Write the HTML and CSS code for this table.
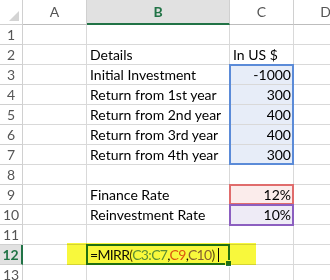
FILE: index.html
```html
<!DOCTYPE html>
<html>
<head>
<meta charset="utf-8">
<title>MIRR example</title>
<link rel="stylesheet" href="styles.css">
</head>
<body>
<div class="sheet">
  <div class="hd corner"><span class="tri"></span></div>
  <div class="hd col">A</div>
  <div class="hd col col-active">B</div>
  <div class="hd col">C</div>
  <div class="hd col">D</div>

  <div class="hd row">1</div><div class="c"></div><div class="c"></div><div class="c"></div><div class="c"></div>
  <div class="hd row">2</div><div class="c"></div><div class="c">Details</div><div class="c">In US $</div><div class="c"></div>
  <div class="hd row">3</div><div class="c"></div><div class="c">Initial Investment</div><div class="c num fill-blue anchor">-1000<div class="range range-blue"></div></div><div class="c"></div>
  <div class="hd row">4</div><div class="c"></div><div class="c">Return from 1st year</div><div class="c num fill-blue">300</div><div class="c"></div>
  <div class="hd row">5</div><div class="c"></div><div class="c">Return from 2nd year</div><div class="c num fill-blue">400</div><div class="c"></div>
  <div class="hd row">6</div><div class="c"></div><div class="c">Return from 3rd year</div><div class="c num fill-blue">400</div><div class="c"></div>
  <div class="hd row">7</div><div class="c"></div><div class="c">Return from 4th year</div><div class="c num fill-blue">300</div><div class="c"></div>
  <div class="hd row">8</div><div class="c"></div><div class="c"></div><div class="c"></div><div class="c"></div>
  <div class="hd row">9</div><div class="c"></div><div class="c">Finance Rate</div><div class="c num fill-red anchor">12%<div class="range range-red"></div></div><div class="c"></div>
  <div class="hd row">10</div><div class="c"></div><div class="c">Reinvestment Rate</div><div class="c num fill-purple anchor">10%<div class="range range-purple"></div></div><div class="c"></div>
  <div class="hd row">11</div><div class="c"></div><div class="c"></div><div class="c"></div><div class="c"></div>
  <div class="hd row row-active">12</div><div class="c"></div><div class="c anchor formula"><span class="fn">=MIRR</span><span class="paren">(</span><span class="ref-blue">C3:C7</span>,<span class="ref-red">C9</span>,<span class="ref-purple">C10</span><span class="paren">)</span><span class="caret"></span><div class="active-box"><span class="handle"></span></div><div class="marker"></div></div><div class="c"></div><div class="c"></div>
  <div class="hd row">13</div><div class="c"></div><div class="c"></div><div class="c"></div><div class="c"></div>
</div>
</body>
</html>
```

FILE: styles.css
```css
html, body {
  margin: 0;
  padding: 0;
  background: #ffffff;
}

body {
  width: 330px;
  height: 280px;
  overflow: hidden;
  font-family: Lato, "Liberation Sans", sans-serif;
}

.sheet {
  display: grid;
  grid-template-columns: 23px 64px 143px 64px 64px;
  grid-template-rows: 25px repeat(13, 20px);
  font-size: 14px;
  color: #000000;
}

.c {
  box-sizing: border-box;
  border-right: 1px solid #d9d9d9;
  border-bottom: 1px solid #d9d9d9;
  padding: 0 3px;
  line-height: 19px;
  white-space: nowrap;
}

.num {
  text-align: right;
  padding-right: 2px;
}

.anchor {
  position: relative;
}

.fill-blue { background: #e7edf8; }
.fill-red { background: #fbeceb; }
.fill-purple { background: #eeebf6; }

.hd {
  box-sizing: border-box;
  border-right: 1px solid #d0d0d0;
  border-bottom: 1px solid #d0d0d0;
  background: #ffffff;
  color: #555555;
  text-align: center;
}

.col {
  line-height: 24px;
  border-bottom-color: #bdbdbd;
}

.col-active {
  background: #e1e1e1;
  color: #217346;
  font-weight: bold;
  border-bottom: 2px solid #217346;
  line-height: 23px;
}

.row {
  line-height: 19px;
}

.row-active {
  background: #e1e1e1;
  color: #217346;
  font-weight: bold;
  border-right: 2px solid #217346;
}

.corner {
  display: flex;
  align-items: flex-end;
  justify-content: flex-end;
  padding: 0 3px 3px 0;
}

.tri {
  width: 0;
  height: 0;
  border-left: 10px solid transparent;
  border-bottom: 10px solid #d4d4d4;
}

.range {
  position: absolute;
  left: -1px;
  top: -1px;
  box-sizing: border-box;
  width: 65px;
  border: 2px solid;
  z-index: 1;
}

.range-blue {
  height: 101px;
  border-color: #5b8bd8;
}

.range-red {
  height: 21px;
  border-color: #e06c6c;
}

.range-purple {
  height: 22px;
  border-color: #8c5fc0;
}

.formula {
  letter-spacing: -0.65px;
}

.fn {
  color: #111111;
}

.paren {
  color: #5a4a10;
}

.ref-blue { color: #5f92d6; }
.ref-red { color: #e2583f; }
.ref-purple { color: #8a64c4; }

.caret {
  display: inline-block;
  width: 0;
  height: 14px;
  border-left: 1px solid #000000;
  margin-left: 3px;
  vertical-align: -2px;
}

.active-box {
  position: absolute;
  left: -1px;
  top: -1px;
  width: 144px;
  height: 21px;
  box-sizing: border-box;
  border: 2px solid #217346;
  z-index: 2;
}

.handle {
  position: absolute;
  right: -4px;
  bottom: -4px;
  width: 5px;
  height: 5px;
  background: #217346;
  border: 1px solid #ffffff;
}

.marker {
  position: absolute;
  left: -20px;
  top: -2px;
  width: 189px;
  height: 22px;
  background: #f8f83c;
  mix-blend-mode: multiply;
  z-index: 3;
}
```
